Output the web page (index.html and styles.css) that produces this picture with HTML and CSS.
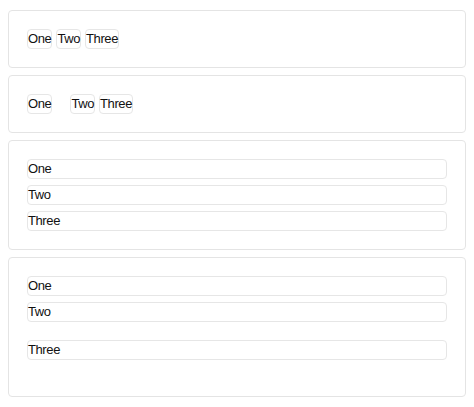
FILE: index.html
```html
<!DOCTYPE html>
<html><head>
<link rel="stylesheet" href="styles.css">
</head><body>

<!--inline items-->
<div class="box row">
	<span class="item">One</span>
	<span class="item">Two</span>
	<span class="item">Three</span>
</div>

<div class="box row">
	<span class="item">One</span>
	<span class="item pushed">Two</span>
	<span class="item">Three</span>
</div>

<!--stacked items-->
<div class="box col">
	<div class="item">One</div>
	<div class="item">Two</div>
	<div class="item">Three</div>
</div>

<div class="box col">
	<div class="item">One</div>
	<div class="item">Two</div>
	<div class="item apart">Three</div>
</div>

</body></html>
```

FILE: styles.css
```css
body		{ margin:8px;
		  padding-top:2px;
		  font-family:"Liberation Sans", Arial, sans-serif;
		  font-size:13px;
		  letter-spacing:-0.4px;
		  color:#111;
		  background:#fff;
}

div.box		{ border:1px solid #e4e4e4;
		  border-radius:4px;
		  padding:18px;
		  margin-bottom:7px;
}

div.row		{ display:flex;
		  gap:4px;
		  align-items:flex-start;
}

div.col		{ display:flex;
		  flex-direction:column;
		  gap:6px;
}

.item		{ border:1px solid #e6e6e6;
		  border-radius:4px;
		  line-height:18px;
}

.item.pushed	{ margin-left:14px;}

.item.apart	{ margin-top:12px;
		  margin-bottom:18px;
}
```
